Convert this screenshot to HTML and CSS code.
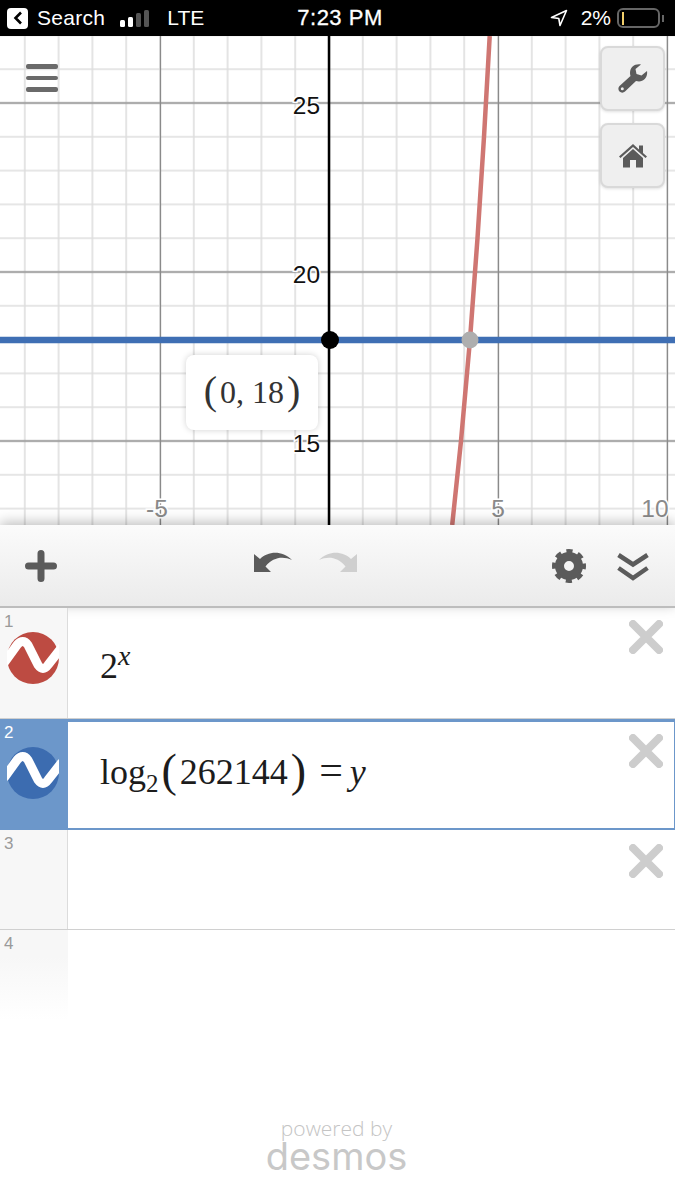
FILE: index.html
```html
<!doctype html>
<html lang="en">
<head>
	<meta charset="UTF-8">
	<title>Desmos</title>
	<link rel="stylesheet" href="styles.css">
</head>
<body>
	<div class="status">
		<div class="status-left">
			<span class="back"><svg width="10" height="14" viewBox="0 0 10 14"><path d="M8 1.5 2.5 7 8 12.5" fill="none" stroke="#000" stroke-width="2.6"/></svg></span>
			<span class="search">Search</span>
			<span class="signal"><i class="on s1"></i><i class="on s2"></i><i class="s3"></i><i class="s4"></i></span>
			<span>LTE</span>
		</div>
		<div class="time">7:23 PM</div>
		<div class="status-right">
			<svg class="arrow" width="18" height="18" viewBox="0 0 18 18"><path d="M1.5 8.5 16.5 1.5 10 16.5 8.8 9.5Z" fill="none" stroke="#fff" stroke-width="1.6" stroke-linejoin="round"/></svg>
			<span>2%</span>
			<span class="battery"><i></i></span>
			<span class="nub"></span>
		</div>
	</div>

	<div class="graph">
		<svg class="plane" viewBox="0 36 675 489" width="675" height="489">
			<defs>
				<pattern id="minor" x="312.1" y="86.1" width="33.8" height="33.8" patternUnits="userSpaceOnUse">
					<path d="M16.9 0V33.8M0 16.9H33.8" stroke="#dedede" stroke-width="1.6" fill="none"/>
				</pattern>
				<pattern id="major" x="245" y="18.5" width="169" height="169" patternUnits="userSpaceOnUse">
					<path d="M84.5 0V169M0 84.5H169" stroke="#8a8a8a" stroke-width="1.3" fill="none"/>
				</pattern>
			</defs>
			<rect x="0" y="36" width="675" height="489" fill="#fff"/>
			<rect x="0" y="36" width="675" height="489" fill="url(#minor)"/>
			<rect x="0" y="36" width="675" height="489" fill="url(#major)"/>
			<line class="axis" x1="329" y1="36" x2="329" y2="525"/>
			<text class="tick" x="306.500" y="114">25</text>
			<text class="tick" x="306.500" y="283">20</text>
			<text class="tick" x="306.500" y="452">15</text>
			<text class="tick faded" x="157" y="517">-5</text>
			<text class="tick faded" x="498" y="517">5</text>
			<text class="tick faded" x="655" y="517">10</text>
			<polyline class="curve" points="489.700,36 484,136.800 477.500,238.200 470,339.600 461,441 452.200,525"/>
			<line class="level" x1="0" y1="340" x2="675" y2="340"/>
			<circle cx="330" cy="340" r="9" fill="#000"/>
			<circle cx="470" cy="340" r="8.500" fill="#aeaeae"/>
		</svg>

		<div class="menu"><i></i><i></i><i></i></div>

		<div class="side-btns">
			<div class="side-btn">
				<svg width="30" height="30" viewBox="0 0 30 30"><path fill="#5b5b5b" fill-rule="evenodd" d="M29 7 23.500 11.500 18.500 10 17.500 5 23 .5C17-.5 12 3 12 9 12 10 12.200 11 12.500 12L1.500 22C0 23.500 0 26 1.500 27.500 3 29 5.500 29 7 27.500L18 17C19 17.300 20 17.500 21 17.500 26 17.500 30 12.500 29 7ZM4.300 23.300A1.500 1.500 0 1 0 4.301 26.300 1.500 1.500 0 1 0 4.300 23.300Z"/></svg>
			</div>
			<div class="side-btn">
				<svg width="28" height="24" viewBox="0 0 28 24"><path fill="#5b5b5b" d="M14 0 0 12.500 1.500 14 14 3 26.500 14 28 12.500 24 9V1.500H20V5.500ZM14 5 4 14V23.500H11V16H17V23.500H24V14Z"/></svg>
			</div>
		</div>

		<div class="tooltip">
			<span class="paren">(</span><span class="coords">0, 18</span><span class="paren">)</span>
		</div>
	</div>

	<div class="toolbar">
		<svg class="plus" width="32" height="32" viewBox="0 0 32 32"><path d="M16 3.500V28.500M3.500 16H28.500" stroke="#5b5b5b" stroke-width="7" stroke-linecap="round"/></svg>
		<div class="history">
			<svg width="38" height="22" viewBox="0 0 38 22"><path fill="#5b5b5b" d="M0 4V22H17L11.500 16.500C19 7 29 6 38 10 28 0 14 1 6 9Z"/></svg>
			<svg class="redo" width="38" height="22" viewBox="0 0 38 22"><path fill="#cfcfcf" d="M0 4V22H17L11.500 16.500C19 7 29 6 38 10 28 0 14 1 6 9Z"/></svg>
		</div>
		<div class="tools">
			<svg width="34" height="34" viewBox="0 0 34 34"><circle cx="17" cy="17" r="9.500" fill="none" stroke="#5b5b5b" stroke-width="9"/><circle cx="17" cy="17" r="14.500" fill="none" stroke="#5b5b5b" stroke-width="5" stroke-dasharray="6 5.390" stroke-dashoffset="3"/></svg>
			<svg width="34" height="32" viewBox="0 0 34 32"><path d="M2.500 5 17 14.500 31.500 5M2.500 18 17 28 31.500 18" fill="none" stroke="#5b5b5b" stroke-width="4.500"/></svg>
		</div>
	</div>

	<div class="list">
		<div class="row row-1">
			<div class="gutter">
				<span class="num">1</span>
				<svg class="wave" width="52" height="52" viewBox="0 0 52 52"><circle cx="26" cy="26" r="26" fill="#bd4b42"/><path d="M-3 31 10 13Q16 6 21 13L31 33Q36 40 41 33L55 15" fill="none" stroke="#fff" stroke-width="9"/></svg>
			</div>
			<div class="expr"><span class="math">2<sup class="var">x</sup></span></div>
			<svg class="del" width="34" height="34" viewBox="0 0 34 34"><path d="M4 4 30 30M30 4 4 30" stroke="#cdcdcd" stroke-width="8" stroke-linecap="round"/></svg>
		</div>
		<div class="row row-2">
			<div class="gutter">
				<span class="num">2</span>
				<svg class="wave" width="52" height="52" viewBox="0 0 52 52"><circle cx="26" cy="26" r="26" fill="#3c6cb0"/><path d="M-3 31 10 13Q16 6 21 13L31 33Q36 40 41 33L55 15" fill="none" stroke="#fff" stroke-width="9"/></svg>
			</div>
			<div class="expr"><span class="math">log<sub>2</sub><span class="big">(</span><span class="digits">262144</span><span class="big">)</span><span class="eq">=</span><span class="var">y</span></span></div>
			<svg class="del" width="34" height="34" viewBox="0 0 34 34"><path d="M4 4 30 30M30 4 4 30" stroke="#cdcdcd" stroke-width="8" stroke-linecap="round"/></svg>
		</div>
		<div class="row row-3">
			<div class="gutter"><span class="num">3</span></div>
			<div class="expr"></div>
			<svg class="del" width="34" height="34" viewBox="0 0 34 34"><path d="M4 4 30 30M30 4 4 30" stroke="#cdcdcd" stroke-width="8" stroke-linecap="round"/></svg>
		</div>
		<div class="row row-4">
			<div class="gutter"><span class="num">4</span></div>
			<div class="expr"></div>
		</div>
	</div>

	<div class="powered">
		<div class="powered-by">powered by</div>
		<div class="wordmark">desmos</div>
	</div>
</body>
</html>
```

FILE: styles.css
```css
* {
	margin: 0;
	padding: 0;
	box-sizing: border-box;
}
body {
	width: 675px;
	height: 1200px;
	overflow: hidden;
	background: #fff;
	font-family: "Liberation Sans", Arial, sans-serif;
}

/* status bar */
.status {
	display: grid;
	grid-template-columns: 1fr auto 1fr;
	align-items: center;
	height: 36px;
	padding: 0 11px 0 7px;
	background: #000;
	color: #fff;
	font-size: 21px;
}
.status-left,
.status-right {
	display: flex;
	align-items: center;
}
.status-right {
	justify-content: flex-end;
}
.back {
	display: flex;
	align-items: center;
	justify-content: center;
	width: 21px;
	height: 21px;
	background: #fff;
	border-radius: 4px;
}
.search {
	margin-left: 9px;
	letter-spacing: .3px;
}
.signal {
	display: flex;
	align-items: flex-end;
	gap: 3px;
	height: 18px;
	margin: 0 18px 0 15px;
}
.signal i {
	width: 5px;
	background: #555;
	border-radius: 1.5px;
}
.signal .on {
	background: #fff;
}
.s1 { height: 7px; }
.s2 { height: 10px; }
.s3 { height: 14px; }
.s4 { height: 17px; }
.time {
	font-size: 22px;
	letter-spacing: .5px;
	-webkit-text-stroke: .3px #fff;
	margin-left: 9px;
}
.arrow {
	margin-right: 13px;
}
.battery {
	display: flex;
	align-items: center;
	width: 43px;
	height: 20px;
	margin-left: 6px;
	padding-left: 3px;
	border: 2px solid #666;
	border-radius: 6px;
}
.battery i {
	width: 2px;
	height: 13px;
	background: #f2cf6b;
}
.nub {
	width: 2px;
	height: 7px;
	margin-left: 2px;
	background: #666;
}

/* graph */
.graph {
	position: relative;
	height: 489px;
	overflow: hidden;
}
.plane {
	display: block;
}
.axis {
	stroke: #000;
	stroke-width: 2.5;
}
.tick {
	font-size: 24.500px;
	fill: #111;
	text-anchor: middle;
	stroke: #fff;
	stroke-width: 3px;
	paint-order: stroke;
}
.faded {
	fill: #8a8a8a;
}
.curve {
	fill: none;
	stroke: #cf7672;
	stroke-width: 4.5;
}
.level {
	stroke: #3f6fb4;
	stroke-width: 6.5;
}
.menu {
	position: absolute;
	left: 26px;
	top: 28px;
	display: flex;
	flex-direction: column;
	gap: 7px;
	width: 32px;
}
.menu i {
	height: 4.500px;
	background: #6a6a6a;
	border-radius: 2px;
}
.side-btns {
	position: absolute;
	left: 600px;
	top: 10px;
	display: flex;
	flex-direction: column;
	gap: 12px;
}
.side-btn {
	display: flex;
	align-items: center;
	justify-content: center;
	width: 65px;
	height: 65px;
	background: #efefef;
	border: 2px solid #d9d9d9;
	border-radius: 8px;
	box-shadow: 0 1px 3px rgba(0, 0, 0, .12);
}
.tooltip {
	position: absolute;
	left: 186px;
	top: 319px;
	display: flex;
	align-items: center;
	justify-content: center;
	width: 132px;
	height: 75px;
	background: #fff;
	border-radius: 8px;
	box-shadow: 0 0 6px rgba(0, 0, 0, .18);
	font-family: "Liberation Serif", "Times New Roman", serif;
	color: #333;
}
.coords {
	font-size: 32px;
	margin: 0 3px;
}
.paren {
	font-size: 40px;
	font-weight: 400;
	position: relative;
	top: -2px;
}

/* toolbar */
.toolbar {
	position: relative;
	display: flex;
	align-items: center;
	height: 83px;
	background: linear-gradient(#fbfbfb, #ebebeb);
	border-bottom: 2px solid #bdbdbd;
	box-shadow: 0 -3px 12px rgba(0, 0, 0, .25);
}
.plus {
	margin-left: 25px;
}
.history {
	display: flex;
	gap: 27px;
	margin-left: 197px;
	margin-top: -9px;
}
.redo {
	transform: scaleX(-1);
}
.tools {
	display: flex;
	align-items: center;
	gap: 30px;
	margin-left: 195px;
}

/* expression list */
.row {
	position: relative;
	display: flex;
	border-bottom: 1px solid #d0d0d0;
}
.row-1 { height: 111px; }
.row-2 { height: 111px; }
.row-3 { height: 100px; }
.row-4 {
	height: 90px;
	border-bottom: none;
}
.gutter {
	position: relative;
	width: 68px;
	background: #f7f7f7;
	border-right: 1px solid #dcdcdc;
}
.num {
	position: absolute;
	left: 4px;
	top: 4px;
	font-size: 17px;
	color: #9a9a9a;
}
.wave {
	position: absolute;
	left: 7px;
	top: 24px;
}
.row-2 .wave {
	top: 28px;
}
.expr {
	flex: 1;
	display: flex;
	align-items: center;
	padding-left: 32px;
}
.del {
	position: absolute;
	right: 12px;
	top: 12px;
}
.math {
	font-family: "Liberation Serif", "Times New Roman", serif;
	font-size: 36px;
	color: #1c1c1c;
	white-space: nowrap;
}
.math sup,
.math sub {
	font-size: 25px;
	line-height: 0;
}
.math sup {
	font-size: 28px;
}
.var {
	font-style: italic;
}
.big {
	font-size: 46px;
	font-weight: 400;
	line-height: 0;
	margin: 0 3px;
	position: relative;
	top: 2px;
}
.eq {
	font-size: 42px;
	margin: 0 7px 0 10px;
	line-height: 0;
}
.row-1 .expr {
	padding-top: 6px;
}
.row-2 {
	border-bottom: none;
}
.row-2 .gutter {
	background: #6c97ca;
	border-right: none;
}
.row-2 .num {
	color: #fff;
}
.row-2 .expr {
	border: 2px solid #6c97ca;
	border-left: none;
	border-right-width: 1px;
	border-top-width: 3px;
	padding-bottom: 7px;
}
.row-2 .del {
	top: 15px;
}
.row-3 .del {
	top: 14px;
}
.row-4 .gutter {
	background: linear-gradient(#f7f7f7 30%, #fff);
	border-right: none;
}

/* footer */
.powered {
	display: flex;
	flex-direction: column;
	align-items: center;
	margin-top: 97px;
	margin-right: 2px;
	color: #c4c4c4;
}
.powered-by {
	font-family: "Open Sans", sans-serif;
	font-size: 21px;
	font-weight: 300;
	line-height: 22px;
}
.wordmark {
	font-family: Inter, sans-serif;
	font-size: 38px;
	font-weight: 400;
	line-height: 34px;
	color: #c8c8c8;
}
```
